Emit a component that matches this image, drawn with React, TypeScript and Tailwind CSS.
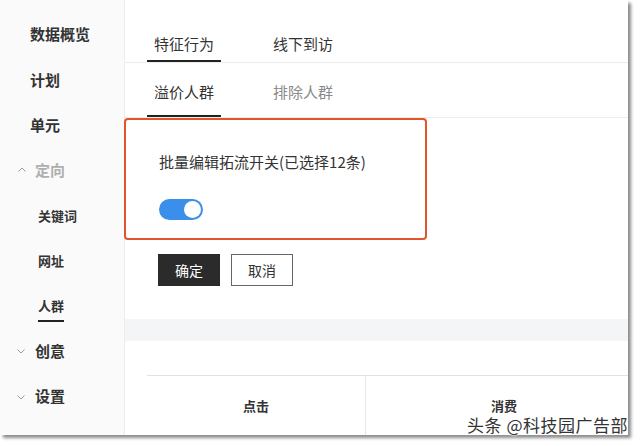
// Audience targeting panel: left nav, two tab rows, the batch "expand traffic"
// switch (outlined in orange), confirm/cancel and the start of a stats table.

import { useState } from 'react'

const FONT = { fontFamily: '"Noto Sans CJK SC", "Noto Sans", sans-serif' }

function Chevron({ up }: { up?: boolean }) {
  return (
    <svg width="10" height="10" viewBox="0 0 10 10" className="shrink-0">
      <path
        d={up ? 'M1.5 6.5 L5 3 L8.5 6.5' : 'M1.5 3.5 L5 7 L8.5 3.5'}
        fill="none"
        stroke="#9a9a9a"
        strokeWidth="1"
      />
    </svg>
  )
}

function Sidebar() {
  const top = 'flex h-[45.25px] items-center text-[15px] font-bold text-[#333]'
  const sub = 'flex h-[45.25px] items-center pl-[38px] text-[13px] font-bold text-[#333]'
  return (
    <nav className="w-[125px] shrink-0 border-r border-[#ededed] bg-[#fafafa] pt-[12px]">
      <div className={top + ' pl-[30px]'}>数据概览</div>
      <div className={top + ' pl-[30px]'}>计划</div>
      <div className={top + ' pl-[30px]'}>单元</div>
      <div className="flex h-[45.25px] items-center gap-[8px] pl-[17px] text-[15px] font-bold text-[#b0b0b0]">
        <Chevron up />
        定向
      </div>
      <div className={sub}>关键词</div>
      <div className={sub}>网址</div>
      <div className={sub}>
        <span className="relative">
          人群
          <span className="absolute left-0 right-0 top-[24px] h-[2px] bg-[#222]" />
        </span>
      </div>
      <div className={top + ' gap-[9px] pl-[16px]'}>
        <Chevron />
        创意
      </div>
      <div className={top + ' gap-[9px] pl-[16px]'}>
        <Chevron />
        设置
      </div>
    </nav>
  )
}

function Tabs({
  items,
  active,
  pad,
  height,
  idle,
}: {
  items: string[]
  active: number
  pad: string
  height: string
  idle: string
}) {
  return (
    <div className={`flex items-end gap-[45px] border-b border-[#ececec] pl-[22px] ${height}`}>
      {items.map((label, i) => (
        <div
          key={label}
          className={`border-b-2 px-[7px] text-[15px] leading-[20px] ${pad} ${
            i === active ? 'border-[#222] text-[#333]' : `border-transparent ${idle}`
          }`}
        >
          {label}
        </div>
      ))}
    </div>
  )
}

export default function App() {
  const [on, setOn] = useState(true)

  return (
    <div className="h-[446px] w-[640px] bg-white" style={FONT}>
      <div className="relative flex h-[435px] w-[628px] bg-white shadow-[3px_3px_3px_rgba(0,0,0,0.45)]">
        <Sidebar />
        <main className="flex min-w-0 flex-1 flex-col">
          <Tabs
            items={['特征行为', '线下到访']}
            active={0}
            pad="pb-[6px]"
            height="h-[63px]"
            idle="text-[#333]"
          />
          <Tabs
            items={['溢价人群', '排除人群']}
            active={0}
            pad="pb-[13px]"
            height="h-[55px]"
            idle="text-[#8a8a8a]"
          />

          <section className="ml-[-1px] h-[122px] w-[303px] rounded-[4px] border-2 border-[#e0562c] pl-[33px] pt-[31px]">
            <p className="text-[15px] leading-[22px] text-[#333]">批量编辑拓流开关(已选择12条)</p>
            <button
              onClick={() => setOn(!on)}
              className={`mt-[26px] flex h-[21px] w-[44px] items-center rounded-full px-[2px] ${
                on ? 'justify-end bg-[#3a8fea]' : 'justify-start bg-[#ccc]'
              }`}
            >
              <span className="h-[17px] w-[17px] rounded-full bg-white" />
            </button>
          </section>

          <div className="mt-[14px] flex gap-[11px] pl-[33px]">
            <button className="h-[32px] w-[62px] bg-[#2b2b2b] text-[14px] text-white">确定</button>
            <button className="h-[32px] w-[62px] border border-[#666] bg-white text-[14px] text-[#333]">
              取消
            </button>
          </div>

          <div className="mt-[33px] h-[22px] bg-[#f4f5f7]" />

          <div className="ml-[22px] mt-[34px] flex flex-1 border-t border-[#e2e2e2]">
            <div className="flex w-[219px] items-center justify-center border-r border-[#e6e6e6] text-[13px] font-bold text-[#333]">
              点击
            </div>
            <div className="flex flex-1 justify-center pl-[14px] pt-[20px] text-[13px] font-bold text-[#333]">
              消费
            </div>
          </div>
        </main>

        <div
          className="absolute bottom-0 right-0 text-[17px] leading-[20px] tracking-[0.5px] text-[#333]"
          style={{ textShadow: '0 0 2px #fff, 0 0 2px #fff, 0 0 2px #fff' }}
        >
          头条 @科技园广告部
        </div>
      </div>
    </div>
  )
}
